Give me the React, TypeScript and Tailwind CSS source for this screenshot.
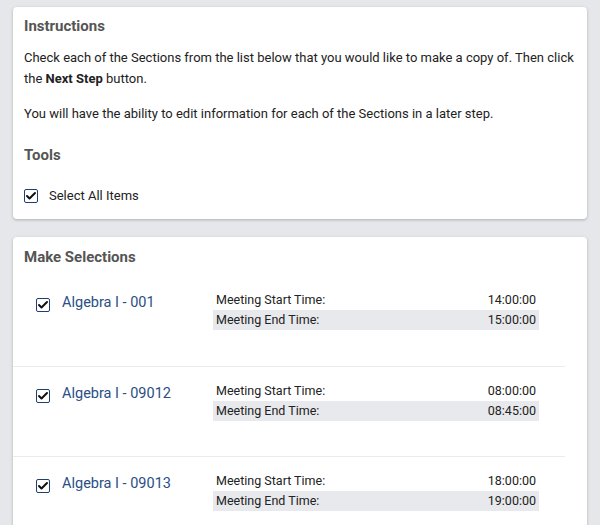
import { Check } from "lucide-react";

const sections = [
  { name: "Algebra I - 001", start: "14:00:00", end: "15:00:00" },
  { name: "Algebra I - 09012", start: "08:00:00", end: "08:45:00" },
  { name: "Algebra I - 09013", start: "18:00:00", end: "19:00:00" },
];

function Box() {
  return (
    <span className="flex h-[14px] w-[14px] shrink-0 items-center justify-center rounded-[2px] border border-[#1f3f73] bg-white">
      <Check size={12} strokeWidth={4} className="text-[#111]" />
    </span>
  );
}

export default function App() {
  return (
    <div
      className="h-[525px] overflow-hidden bg-[#e6e7ea] px-[13px] pt-[7px] text-[#222]"
      style={{ fontFamily: "Roboto, 'Liberation Sans', sans-serif" }}
    >
      {/* Instructions card */}
      <div className="rounded-[4px] bg-white px-[11px] pt-[9px] pb-[14px] shadow-[0_1px_3px_rgba(0,0,0,0.25)]">
        <h2 className="text-[15px] font-bold leading-[20px] text-[#555]">Instructions</h2>
        <p className="mt-[11px] text-[13px] leading-[21px]">
          Check each of the Sections from the list below that you would like to make a copy of. Then click the{" "}
          <b>Next Step</b> button.
        </p>
        <p className="mt-[14px] text-[13px] leading-[21px]">
          You will have the ability to edit information for each of the Sections in a later step.
        </p>
        <h2 className="mt-[21px] text-[15px] font-bold leading-[20px] text-[#555]">Tools</h2>
        <label className="mt-[22px] flex items-center gap-[11px] text-[13px] leading-[18px]">
          <Box />
          Select All Items
        </label>
      </div>

      {/* Make Selections card */}
      <div className="mt-[18px] rounded-[4px] bg-white pt-[10px] shadow-[0_1px_3px_rgba(0,0,0,0.25)]">
        <h2 className="px-[11px] text-[15px] font-bold leading-[20px] text-[#555]">Make Selections</h2>
        <div className="mt-[9px] mr-[22px]">
          {sections.map((s, i) => (
            <div
              key={s.name}
              className={`flex h-[90px] items-start pt-[14px] ${i > 0 ? "border-t border-[#ebebed]" : ""}`}
            >
              <div className="flex w-[200px] items-start gap-[12px] pl-[23px] pt-[3px]">
                <span className="mt-[5px]">
                  <Box />
                </span>
                <span className="text-[14.5px] leading-[20px] text-[#2a4e85]">{s.name}</span>
              </div>
              <div className="w-[326px] text-[12.5px] leading-[20px]">
                <div className="flex justify-between px-[3px]">
                  <span>Meeting Start Time:</span>
                  <span>{s.start}</span>
                </div>
                <div className="flex justify-between bg-[#e8e9ec] px-[3px]">
                  <span>Meeting End Time:</span>
                  <span>{s.end}</span>
                </div>
              </div>
            </div>
          ))}
        </div>
      </div>
    </div>
  );
}
